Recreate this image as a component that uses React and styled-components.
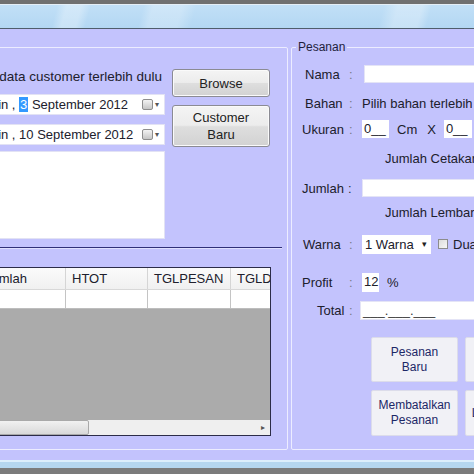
import React from "react";
import styled, { createGlobalStyle } from "styled-components";

const GlobalStyle = createGlobalStyle`
  html, body {
    margin: 0;
    padding: 0;
    background: #7d7d7d;
  }
  body {
    font-family: "Liberation Sans", Arial, sans-serif;
    color: #20202c;
  }
`;

const GRID_COLUMNS = [
  { title: "Harga", width: 81 },
  { title: "Jumlah", width: 87 },
  { title: "HTOT", width: 82 },
  { title: "TGLPESAN", width: 83 },
  { title: "TGLDIAMBIL", width: 83 },
];

function DatePicker({ day, rest, selected }) {
  return (
    <Picker>
      <PickerText>
        Senin , {selected ? <Selected>{day}</Selected> : day} {rest}
      </PickerText>
      <CalendarIcon />
      <Caret>▾</Caret>
    </Picker>
  );
}

function FormRow({ label, indent, tight, mt, children }) {
  return (
    <Row $mt={mt}>
      <Label $indent={indent}>
        {label}
        <Colon $tight={tight}>:</Colon>
      </Label>
      {children}
    </Row>
  );
}

function App() {
  const template = GRID_COLUMNS.map((c) => c.width + "px").join(" ");
  return (
    <>
      <GlobalStyle />
      <Window>
        <TitleBar />
        <Client>
          <LeftGroup>
            <TopSection>
              <CustomerCol>
                <Hint>Pilih data customer terlebih dulu</Hint>
                <DatePicker day="3" rest="September 2012" selected />
                <DatePicker day="10" rest="September 2012" />
                <Memo />
              </CustomerCol>
              <ButtonCol>
                <WinButton $h={28}>Browse</WinButton>
                <WinButton $h={42}>
                  Customer
                  <br />
                  Baru
                </WinButton>
              </ButtonCol>
            </TopSection>
            <Rule />
            <Grid>
              <GridRow $cols={template} $header>
                {GRID_COLUMNS.map((c) => (
                  <HeaderCell key={c.title}>{c.title}</HeaderCell>
                ))}
              </GridRow>
              <GridRow $cols={template}>
                {GRID_COLUMNS.map((c) => (
                  <DataCell key={c.title} />
                ))}
              </GridRow>
              <GridEmpty />
              <HScroll>
                <ScrollThumb />
                <ScrollTrack />
                <ScrollArrow>▸</ScrollArrow>
              </HScroll>
            </Grid>
          </LeftGroup>

          <RightGroup>
            <Legend>Pesanan</Legend>
            <FormRow label="Nama" indent={13} mt={10}>
              <TextBox $ml={2} />
            </FormRow>
            <FormRow label="Bahan" indent={13} mt={9}>
              <Plain>Pilih bahan terlebih dulu</Plain>
            </FormRow>
            <FormRow label="Ukuran" indent={10} mt={6}>
              <SmallBox $w={27}>0__</SmallBox>
              <Plain $ml={8}>Cm</Plain>
              <Plain $ml={10}>X</Plain>
              <SmallBox $w={28} $ml={8}>0__</SmallBox>
            </FormRow>
            <Caption $mt={10}>Jumlah Cetakan</Caption>
            <FormRow label="Jumlah" indent={10} tight mt={9}>
              <TextBox />
            </FormRow>
            <Caption $mt={5}>Jumlah Lembar</Caption>
            <FormRow label="Warna" indent={11} mt={11}>
              <Select>
                1 Warna
                <SelectArrow>▾</SelectArrow>
              </Select>
              <Check />
              <Plain $ml={5}>Dua Sisi</Plain>
            </FormRow>
            <FormRow label="Profit" indent={10} mt={18}>
              <SmallBox $w={17} $h={19}>12</SmallBox>
              <Plain $ml={8}>%</Plain>
            </FormRow>
            <FormRow label="Total" indent={25} mt={8}>
              <TextBox $ml={-2} $h={19}>
                <Mask>___.___.___</Mask>
              </TextBox>
            </FormRow>
            <ActionGrid>
              <ActionButton>
                Pesanan
                <br />
                Baru
              </ActionButton>
              <ActionButton>Simpan</ActionButton>
              <ActionButton>
                Membatalkan
                <br />
                Pesanan
              </ActionButton>
              <ActionButton>Lihat Laporan</ActionButton>
            </ActionGrid>
          </RightGroup>
        </Client>
        <BottomFrame />
      </Window>
    </>
  );
}

const Window = styled.div`
  width: 474px;
  height: 474px;
  display: flex;
  flex-direction: column;
  overflow: hidden;
`;

const TitleBar = styled.div`
  height: 24px;
  flex-shrink: 0;
  border-top: 4px solid #707070;
  border-bottom: 1px solid #4f5d6c;
  box-shadow: inset 0 1px 0 #e4eef6;
  background:
    linear-gradient(
      105deg,
      transparent 0 12%,
      rgba(255, 255, 255, 0.3) 14% 17%,
      transparent 19% 30%,
      rgba(255, 255, 255, 0.24) 32% 38%,
      transparent 41% 80%,
      rgba(255, 255, 255, 0.28) 83% 88%,
      transparent 90%
    ),
    linear-gradient(#c2e0f7, #b3d7f3);
`;

const Client = styled.div`
  flex: 1;
  display: flex;
  gap: 3px;
  padding: 11px 0 10px;
  background: #c3c3fd;
  overflow: hidden;
`;

const LeftGroup = styled.fieldset`
  box-sizing: border-box;
  flex-shrink: 0;
  width: 418px;
  margin: 7px 0 0 -130px;
  padding: 0;
  border: 1px solid #ececff;
  border-radius: 2px;
  display: flex;
  flex-direction: column;
  min-width: 0;
`;

const TopSection = styled.div`
  display: flex;
  gap: 7px;
  padding: 21px 0 0 99px;
`;

const CustomerCol = styled.div`
  width: 195px;
  display: flex;
  flex-direction: column;
`;

const Hint = styled.div`
  height: 16px;
  line-height: 16px;
  font-size: 13.5px;
  display: flex;
  justify-content: flex-end;
  padding-right: 3px;
  white-space: nowrap;
  margin-bottom: 9px;
`;

const Picker = styled.div`
  box-sizing: border-box;
  height: 21px;
  margin-bottom: 9px;
  padding: 0 4px;
  display: flex;
  align-items: center;
  background: #fff;
  border: 1px solid #e2e2f4;
  font-size: 13px;
`;

const PickerText = styled.span`
  flex: 1;
  white-space: nowrap;
  overflow: hidden;
`;

const Selected = styled.span`
  background: #3399ff;
  color: #fff;
  padding: 0 1px;
`;

const CalendarIcon = styled.span`
  width: 9px;
  height: 9px;
  border: 1px solid #8e8e8e;
  border-radius: 2px;
  background: linear-gradient(#f4f4f4, #c6c6c6);
`;

const Caret = styled.span`
  font-size: 8px;
  color: #555;
  margin: 0 1px 0 2px;
`;

const Memo = styled.div`
  box-sizing: border-box;
  height: 88px;
  margin-top: -3px;
  background: #fff;
  border: 1px solid #e2e2f4;
`;

const ButtonCol = styled.div`
  width: 98px;
  display: flex;
  flex-direction: column;
  gap: 8px;
`;

const WinButton = styled.button`
  box-sizing: border-box;
  height: ${(p) => p.$h}px;
  padding: 0;
  font-family: inherit;
  font-size: 13px;
  line-height: 17px;
  color: #222;
  border: 1px solid #8b8b93;
  border-radius: 3px;
  background: linear-gradient(#f4f4f4 0%, #ececec 48%, #dedede 52%, #d2d2d2 100%);
  box-shadow: inset 0 0 0 1px #fafafa;
`;

const Rule = styled.div`
  height: 1px;
  margin: 8px 5px 0 99px;
  background: #2f2f78;
  border-bottom: 1px solid #dedeff;
`;

const Grid = styled.div`
  box-sizing: border-box;
  height: 169px;
  margin: 18px 16px 0 26px;
  border: 1px solid #2c2c48;
  background: #ababab;
  display: flex;
  flex-direction: column;
  overflow: hidden;
`;

const GridRow = styled.div`
  display: grid;
  grid-template-columns: ${(p) => p.$cols};
  height: ${(p) => (p.$header ? 21 : 18)}px;
  background: ${(p) => (p.$header ? "linear-gradient(#fbfbfb, #f0f0f0)" : "#fff")};
  border-bottom: 1px solid ${(p) => (p.$header ? "#d8d8d8" : "#bdbdbd")};
  flex-shrink: 0;
`;

const HeaderCell = styled.div`
  border-right: 1px solid #d5d5d5;
  padding-left: 6px;
  font-size: 13px;
  line-height: 21px;
  white-space: nowrap;
  overflow: hidden;
`;

const DataCell = styled.div`
  border-right: 1px solid #c4c4c4;
`;

const GridEmpty = styled.div`
  flex: 1;
`;

const HScroll = styled.div`
  height: 15px;
  display: flex;
  background: #efefef;
  flex-shrink: 0;
`;

const ScrollThumb = styled.div`
  box-sizing: border-box;
  width: 191px;
  border: 1px solid #a9a9a9;
  border-radius: 2px;
  background: linear-gradient(#f1f1f1, #d9d9d9);
`;

const ScrollTrack = styled.div`
  flex: 1;
`;

const ScrollArrow = styled.div`
  width: 15px;
  font-size: 8px;
  line-height: 15px;
  color: #555;
  text-align: center;
`;

const RightGroup = styled.fieldset`
  box-sizing: border-box;
  flex-shrink: 0;
  width: 262px;
  margin: 0;
  padding: 0;
  border: 1px solid #ececff;
  border-radius: 2px;
  min-width: 0;
`;

const Legend = styled.legend`
  margin-left: 4px;
  padding: 0 2px;
  font-size: 12px;
  line-height: 14px;
  color: #1e1e3c;
`;

const Row = styled.div`
  display: flex;
  align-items: center;
  height: 20px;
  margin-top: ${(p) => p.$mt}px;
  font-size: 13px;
  white-space: nowrap;
`;

const Label = styled.div`
  box-sizing: border-box;
  width: 70px;
  flex-shrink: 0;
  display: flex;
  padding-left: ${(p) => p.$indent}px;
  font-size: 13px;
`;

const Colon = styled.span`
  ${(p) =>
    p.$tight
      ? "margin-left: 4px; color: #333;"
      : "margin-left: auto; width: 13px; color: #7a7a8a;"}
`;

const TextBox = styled.div`
  box-sizing: border-box;
  flex: 1;
  height: ${(p) => p.$h || 18}px;
  margin-left: ${(p) => p.$ml || 0}px;
  padding-left: 2px;
  background: #fff;
  border: 1px solid #e4e4f6;
  font-size: 13px;
  line-height: 17px;
`;

const Mask = styled.span`
  color: #333;
`;

const SmallBox = styled.div`
  box-sizing: border-box;
  width: ${(p) => p.$w}px;
  height: ${(p) => p.$h || 18}px;
  margin-left: ${(p) => p.$ml || 0}px;
  padding-left: 2px;
  background: #fff;
  font-size: 13px;
  line-height: 18px;
`;

const Plain = styled.span`
  margin-left: ${(p) => p.$ml || 0}px;
  font-size: 13px;
`;

const Caption = styled.div`
  height: 20px;
  line-height: 20px;
  margin-top: ${(p) => p.$mt}px;
  padding-left: 93px;
  font-size: 13px;
  white-space: nowrap;
`;

const Select = styled.div`
  box-sizing: border-box;
  width: 69px;
  height: 19px;
  padding-left: 3px;
  display: flex;
  align-items: center;
  justify-content: space-between;
  background: #fff;
  font-size: 13px;
`;

const SelectArrow = styled.span`
  font-size: 9px;
  color: #222;
  margin-right: 4px;
`;

const Check = styled.span`
  box-sizing: border-box;
  width: 10px;
  height: 10px;
  margin-left: 7px;
  border: 1px solid #8c8c8c;
  background: linear-gradient(135deg, #dcdcdc, #f7f7f7);
`;

const ActionGrid = styled.div`
  display: grid;
  grid-template-columns: 87px 87px;
  grid-template-rows: 45px 46px;
  column-gap: 7px;
  row-gap: 8px;
  margin: 17px 0 0 79px;
`;

const ActionButton = styled.button`
  padding: 0;
  font-family: inherit;
  font-size: 12px;
  line-height: 15px;
  color: #1c2766;
  background: #f1f1f6;
  border: 1px solid #dcdcea;
  border-radius: 2px;
  white-space: nowrap;
`;

const BottomFrame = styled.div`
  height: 14px;
  flex-shrink: 0;
  background: linear-gradient(#dceefb 0 2px, #b5d6ef 2px 8px, #7b7b7b 8px);
`;

export default App;
